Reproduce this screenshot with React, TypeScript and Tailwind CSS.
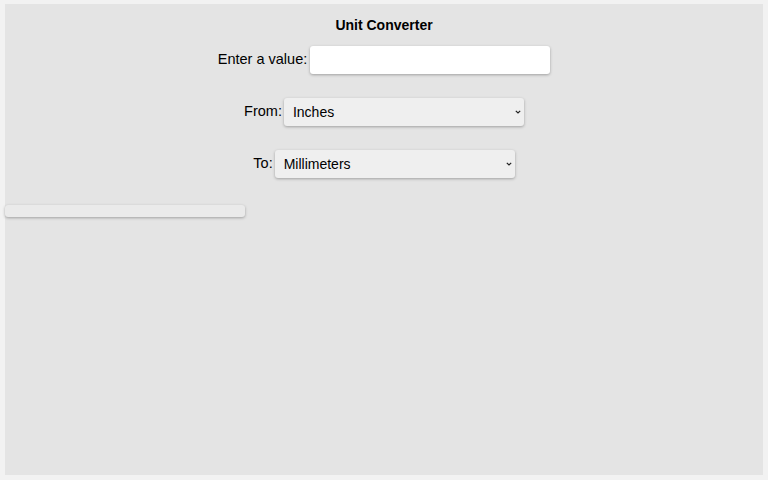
import { useState } from "react";

const units = ["Inches", "Feet", "Centimeters", "Millimeters", "Meters"];

function Chevron() {
  return (
    <svg
      className="pointer-events-none absolute right-[3px] top-1/2 -translate-y-1/2"
      width="6"
      height="4"
      viewBox="0 0 6 4"
      fill="none"
    >
      <path d="M0.8 0.8 L3 3 L5.2 0.8" stroke="#222" strokeWidth="1.2" />
    </svg>
  );
}

function UnitSelect({ value, onChange }: { value: string; onChange: (v: string) => void }) {
  return (
    <div className="relative">
      <select
        value={value}
        onChange={(e) => onChange(e.target.value)}
        className="h-[28px] w-[240px] appearance-none rounded-[3px] bg-[#efefef] pl-[9px] text-[14px] shadow-[0_1px_3px_rgba(0,0,0,0.3)] outline-none"
      >
        {units.map((u) => (
          <option key={u}>{u}</option>
        ))}
      </select>
      <Chevron />
    </div>
  );
}

export default function App() {
  const [value, setValue] = useState("");
  const [from, setFrom] = useState("Inches");
  const [to, setTo] = useState("Millimeters");

  return (
    <div className="h-screen w-full bg-[#f2f2f2] px-[5px] pt-[4px] pb-[5px] font-['Liberation_Sans',Arial,sans-serif] text-[14px] text-black">
      <div className="h-full w-full bg-[#e4e4e4] pt-[11px]">
        <h1 className="text-center text-[14px] font-bold leading-[20px]">Unit Converter</h1>

        {/* Value input */}
        <div className="mt-[11px] flex items-center justify-center gap-[3px]">
          <label className="text-[14.5px]">Enter a value:</label>
          <input
            type="text"
            value={value}
            onChange={(e) => setValue(e.target.value)}
            className="h-[28px] w-[240px] rounded-[3px] bg-white px-2 shadow-[0_1px_3px_rgba(0,0,0,0.3)] outline-none"
          />
        </div>

        {/* From select */}
        <div className="mt-[24px] flex items-center justify-center gap-[2px]">
          <label className="text-[14.5px]">From:</label>
          <UnitSelect value={from} onChange={setFrom} />
        </div>

        {/* To select */}
        <div className="mt-[24px] flex items-center justify-center gap-[2px]">
          <label className="text-[14.5px]">To:</label>
          <UnitSelect value={to} onChange={setTo} />
        </div>

        {/* Result */}
        <div className="mt-[27px] h-[12px] w-[240px] rounded-[3px] bg-[#eaeaea] shadow-[0_1px_3px_rgba(0,0,0,0.3)]"></div>
      </div>
    </div>
  );
}
